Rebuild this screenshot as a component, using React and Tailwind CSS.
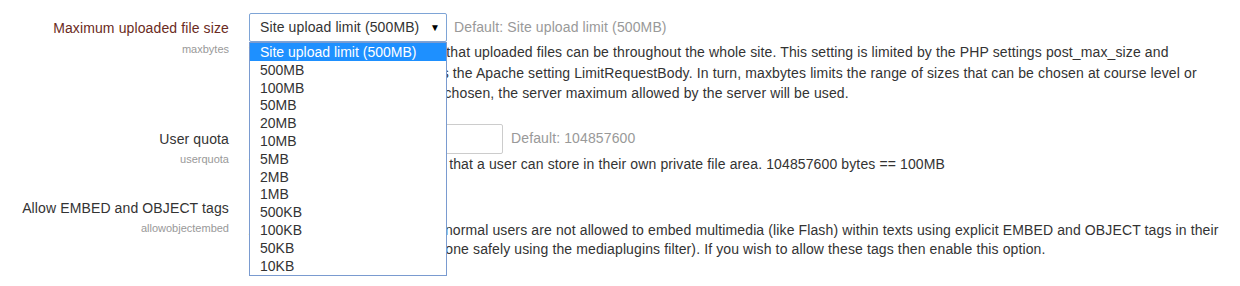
import React from 'react';

const options = ['Site upload limit (500MB)', '500MB', '100MB', '50MB', '20MB', '10MB', '5MB', '2MB', '1MB', '500KB', '100KB', '50KB', '10KB'];

const Label = ({ title, name, red, gap = 'mt-[3px]' }) => (
    <div className="w-[249px] shrink-0 pr-[20px] text-right">
        <div className={`text-[14px] leading-[20px] ${red ? 'text-[#6b2b22]' : 'text-[#333]'}`}>{title}</div>
        <div className={`text-[11px] leading-[14px] text-[#999] tracking-normal ${gap}`}>{name}</div>
    </div>
);

export default function App() {
    return (
        <div className="relative w-[1240px] h-[286px] bg-white text-[#333] text-[14px] tracking-[0.12px]" style={{ fontFamily: '"Liberation Sans", Arial, sans-serif' }}>
            <div className="pt-[13px]">
                {/* maxbytes */}
                <div className="flex">
                    <div className="pt-[5px]"><Label title="Maximum uploaded file size" name="maxbytes" red gap="mt-[4px]" /></div>
                    <div className="w-[980px]">
                        <div className="flex items-center gap-[7px]">
                            <div className="w-[198px] h-[29px] border border-[#7ea4d6] rounded-[2px] flex items-center justify-between pl-[10px] pr-[6px]">
                                <span>Site upload limit (500MB)</span>
                                <span className="text-[10px] text-black">▼</span>
                            </div>
                            <span className="text-[#999]">Default: Site upload limit (500MB)</span>
                        </div>
                        <p className="leading-[20.5px]">This specifies a maximum size that uploaded files can be throughout the whole site. This setting is limited by the PHP settings post_max_size and upload_max_filesize, as well as the Apache setting LimitRequestBody. In turn, maxbytes limits the range of sizes that can be chosen at course level or module level. If 'Server limit' is chosen, the server maximum allowed by the server will be used.</p>
                    </div>
                </div>

                {/* userquota */}
                <div className="flex mt-[20px]">
                    <div className="pt-[5px]"><Label title="User quota" name="userquota" /></div>
                    <div className="w-[980px]">
                        <div className="flex items-center gap-[8px]">
                            <div className="w-[254px] h-[30px] border border-[#ccc] rounded-[2px]" />
                            <span className="text-[#999]">Default: 104857600</span>
                        </div>
                        <p className="leading-[20px]">The maximum number of bytes that a user can store in their own private file area. 104857600 bytes == 100MB</p>
                    </div>
                </div>

                {/* allowobjectembed */}
                <div className="flex mt-[26px]">
                    <div className="-mt-[2px]"><Label title="Allow EMBED and OBJECT tags" name="allowobjectembed" /></div>
                    <div className="w-[980px]">
                        <div className="h-[21px] flex items-center pl-[4px]">
                            <div className="w-[13px] h-[13px] border border-[#999] rounded-[2px]" />
                        </div>
                        <p className="leading-[19.5px]">As a default security measure, normal users are not allowed to embed multimedia (like Flash) within texts using explicit EMBED and OBJECT tags in their HTML (although it can still be done safely using the mediaplugins filter). If you wish to allow these tags then enable this option.</p>
                    </div>
                </div>
            </div>

            {/* open dropdown list */}
            <div className="absolute left-[249px] top-[42px] w-[198px] bg-white border border-[#7a9bd0] pb-[1px] tracking-normal">
                {options.map((o, i) => (
                    <div key={o} className={`h-[17.8px] pt-[1px] leading-[16.8px] pl-[10px] ${i === 0 ? 'bg-[#1e90ff] text-white' : 'text-[#333]'}`}>{o}</div>
                ))}
            </div>
        </div>
    );
}
